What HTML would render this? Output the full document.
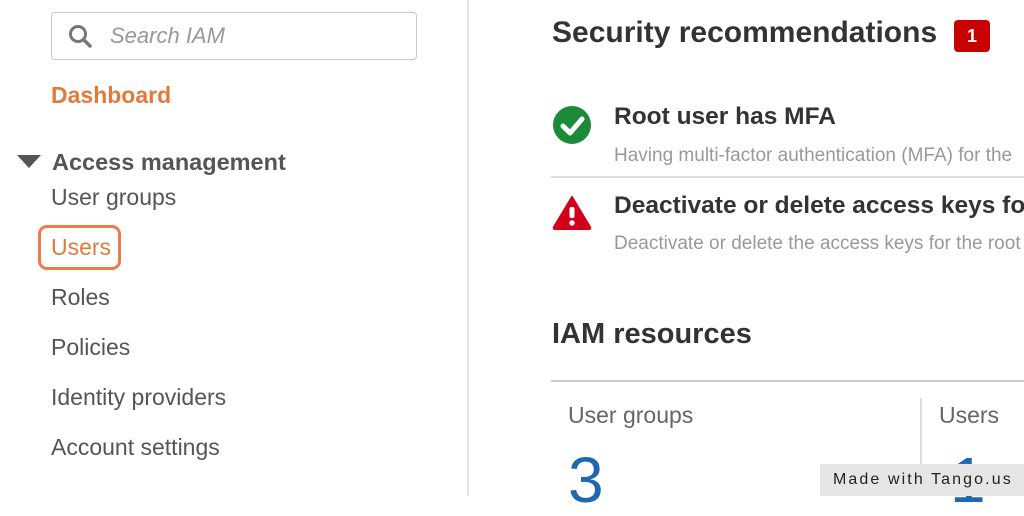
<!DOCTYPE html>
<html><head><style>
*{margin:0;padding:0;box-sizing:border-box}
body{width:1024px;height:496px;overflow:hidden;background:#fff;font-family:"Liberation Sans",Arial,sans-serif;position:relative}
.a{position:absolute;white-space:nowrap;line-height:1}
.nav{font-size:23px;color:#555;left:51px}
</style></head><body>
<div class="a" style="left:467px;top:0;width:2px;height:496px;background:#e4e4e4"></div>
<div class="a" style="left:51px;top:12px;width:366px;height:48px;border:1.5px solid #c8c8c8;border-radius:4px"></div>
<svg class="a" style="left:68px;top:24px" width="26" height="26" viewBox="0 0 26 26"><circle cx="10" cy="10" r="7.5" fill="none" stroke="#777" stroke-width="3"/><line x1="15.5" y1="15.5" x2="22" y2="22" stroke="#777" stroke-width="3.5" stroke-linecap="round"/></svg>
<div class="a" style="left:110px;top:25px;font-size:22px;font-style:italic;color:#999">Search IAM</div>
<div class="a" style="left:51px;top:84px;font-size:23px;font-weight:bold;color:#e07b3c">Dashboard</div>
<svg class="a" style="left:17px;top:155px" width="24" height="14"><polygon points="0,0 24,0 12,13" fill="#555"/></svg>
<div class="a" style="left:52px;top:151px;font-size:23.5px;font-weight:bold;color:#555">Access management</div>
<div class="a nav" style="top:186px">User groups</div>
<div class="a" style="left:38px;top:225px;width:83px;height:45px;border:3px solid #ec7d4b;border-radius:9px"></div>
<div class="a nav" style="top:236px;color:#e07b3c">Users</div>
<div class="a nav" style="top:286px">Roles</div>
<div class="a nav" style="top:336px">Policies</div>
<div class="a nav" style="top:386px">Identity providers</div>
<div class="a nav" style="top:436px">Account settings</div>

<div class="a" style="left:552px;top:18px;font-size:30px;font-weight:bold;color:#333">Security recommendations</div>
<div class="a" style="left:954px;top:20px;width:36px;height:32px;background:#c80000;border-radius:4px;color:#fff;font-weight:bold;font-size:18px;text-align:center;line-height:32px">1</div>
<svg class="a" style="left:552px;top:105px" width="40" height="40"><circle cx="20" cy="20" r="19" fill="#1d8a3a"/><path d="M11 21 L18 28 L30 14" fill="none" stroke="#fff" stroke-width="5" stroke-linecap="round" stroke-linejoin="round"/></svg>
<div class="a" style="left:614px;top:105px;font-size:24.5px;font-weight:bold;color:#333">Root user has MFA</div>
<div class="a" style="left:614px;top:146px;font-size:19px;color:#999">Having multi-factor authentication (MFA) for the</div>
<div class="a" style="left:551px;top:176px;width:473px;height:2px;background:#ddd"></div>
<svg class="a" style="left:552px;top:195px" width="40" height="35"><path d="M20 2 L38 32 Q39 34 37 34 L3 34 Q1 34 2 32 Z" fill="#d0021b" stroke="#d0021b" stroke-linejoin="round" stroke-width="2"/><rect x="17.5" y="12" width="5" height="11" rx="2" fill="#fff"/><circle cx="20" cy="28" r="2.7" fill="#fff"/></svg>
<div class="a" style="left:614px;top:194px;font-size:24.5px;font-weight:bold;color:#333">Deactivate or delete access keys for</div>
<div class="a" style="left:614px;top:234px;font-size:19px;color:#999">Deactivate or delete the access keys for the root</div>
<div class="a" style="left:552px;top:320px;font-size:29px;font-weight:bold;color:#333">IAM resources</div>
<div class="a" style="left:551px;top:380px;width:473px;height:2px;background:#ccc"></div>
<div class="a" style="left:568px;top:404px;font-size:23px;color:#666">User groups</div>
<div class="a" style="left:920px;top:398px;width:2px;height:98px;background:#ddd"></div>
<div class="a" style="left:939px;top:404px;font-size:23px;color:#666">Users</div>
<div class="a" style="left:568px;top:448px;font-size:64px;color:#1f66b3">3</div>
<div class="a" style="left:950px;top:448px;font-size:64px;color:#1f66b3">1</div>
<div class="a" style="left:820px;top:464px;width:204px;height:32px;background:#e6e6e6;color:#222;font-size:16px;letter-spacing:2.1px;line-height:32px;padding-left:13px">Made with Tango.us</div>
</body></html>
